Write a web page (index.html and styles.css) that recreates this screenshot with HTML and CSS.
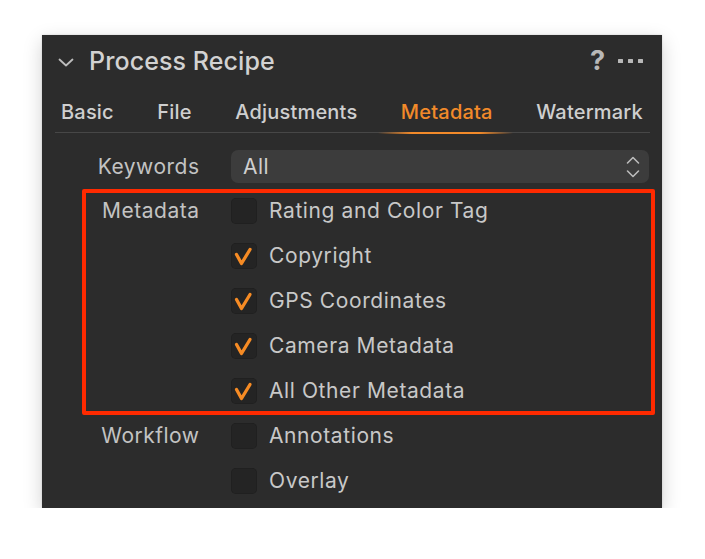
FILE: index.html
```html
<!DOCTYPE html>
<html>
<head>
<meta charset="utf-8">
<link rel="stylesheet" href="styles.css">
</head>
<body>
<div class="panel">
  <div class="header">
    <svg class="chev" width="16" height="9" viewBox="0 0 16 9"><path d="M1.5 1.5 L8 7.5 L14.5 1.5" fill="none" stroke="#bdbdbd" stroke-width="1.8" stroke-linecap="round" stroke-linejoin="round"/></svg>
    <div class="title">Process Recipe</div>
    <div class="spacer"></div>
    <div class="help">?</div>
    <div class="more"><span></span><span></span><span></span></div>
  </div>
  <div class="tabs">
    <div class="tab">Basic</div>
    <div class="tab">File</div>
    <div class="tab">Adjustments</div>
    <div class="tab active">Metadata</div>
    <div class="tab">Watermark</div>
  </div>
  <div class="form">
    <div class="row select-row">
      <div class="label">Keywords</div>
      <div class="select">
        <span>All</span>
        <svg width="14" height="22" viewBox="0 0 14 22"><path d="M1.5 7 L7 1.5 L12.5 7" fill="none" stroke="#bcbcbc" stroke-width="1.6" stroke-linecap="round" stroke-linejoin="round"/><path d="M1.5 15 L7 20.5 L12.5 15" fill="none" stroke="#bcbcbc" stroke-width="1.6" stroke-linecap="round" stroke-linejoin="round"/></svg>
      </div>
    </div>
    <div class="group highlighted">
      <div class="row">
        <div class="label">Metadata</div>
        <div class="check"></div>
        <div class="text">Rating and Color Tag</div>
      </div>
      <div class="row">
        <div class="label"></div>
        <div class="check on"><svg width="26" height="26" viewBox="0 0 26 26"><path d="M5.5 11.5 L10.5 20.5 L19 6.5" fill="none" stroke="#f68b24" stroke-width="3.3" stroke-linecap="round" stroke-linejoin="round"/></svg></div>
        <div class="text">Copyright</div>
      </div>
      <div class="row">
        <div class="label"></div>
        <div class="check on"><svg width="26" height="26" viewBox="0 0 26 26"><path d="M5.5 11.5 L10.5 20.5 L19 6.5" fill="none" stroke="#f68b24" stroke-width="3.3" stroke-linecap="round" stroke-linejoin="round"/></svg></div>
        <div class="text">GPS Coordinates</div>
      </div>
      <div class="row">
        <div class="label"></div>
        <div class="check on"><svg width="26" height="26" viewBox="0 0 26 26"><path d="M5.5 11.5 L10.5 20.5 L19 6.5" fill="none" stroke="#f68b24" stroke-width="3.3" stroke-linecap="round" stroke-linejoin="round"/></svg></div>
        <div class="text">Camera Metadata</div>
      </div>
      <div class="row">
        <div class="label"></div>
        <div class="check on"><svg width="26" height="26" viewBox="0 0 26 26"><path d="M5.5 11.5 L10.5 20.5 L19 6.5" fill="none" stroke="#f68b24" stroke-width="3.3" stroke-linecap="round" stroke-linejoin="round"/></svg></div>
        <div class="text">All Other Metadata</div>
      </div>
    </div>
    <div class="row">
      <div class="label">Workflow</div>
      <div class="check"></div>
      <div class="text">Annotations</div>
    </div>
    <div class="row">
      <div class="label"></div>
      <div class="check"></div>
      <div class="text">Overlay</div>
    </div>
  </div>
</div>
</body>
</html>
```
FILE: styles.css
```css
html, body {
  margin: 0;
  padding: 0;
  background: #ffffff;
}
body {
  font-family: "Inter", "Noto Sans", sans-serif;
  color: #c8c8c8;
  padding: 35px 0 0 42px;
}
.panel {
  width: 620px;
  height: 473px;
  background: #2c2c2c;
  box-shadow: 0 6px 18px rgba(0,0,0,0.18), 0 0 2px rgba(0,0,0,0.15);
  padding: 0 12px 0 13px;
  box-sizing: border-box;
}
.header {
  height: 52px;
  display: flex;
  align-items: center;
}
.chev {
  margin-left: 3px;
  margin-right: 15px;
  margin-top: 2px;
}
.title {
  font-size: 25px;
  font-weight: 500;
  color: #d2d2d2;
  letter-spacing: 0.1px;
}
.spacer { flex: 1; }
.help {
  font-size: 27px;
  font-weight: 700;
  color: #b8b8b8;
  margin-right: 13px;
  margin-top: -1px;
}
.more {
  display: flex;
  gap: 5px;
  margin-right: 7px;
}
.more span {
  width: 5px;
  height: 4px;
  background: #b8b8b8;
  border-radius: 0.5px;
}
.tabs {
  display: flex;
  justify-content: space-between;
  padding: 6px 7px 0 6px;
  height: 39px;
  border-bottom: 1px solid #474747;
}
.tab {
  font-size: 20px;
  font-weight: 500;
  letter-spacing: 0.2px;
  color: #cfcfcf;
  line-height: 39px;
  position: relative;
}
.tab.active {
  color: #f28a2a;
}
.tab.active::after {
  content: "";
  position: absolute;
  left: -23px;
  right: -20px;
  bottom: -2px;
  height: 2px;
  background: linear-gradient(90deg, rgba(242,138,42,0) 0%, #f28a2a 25%, #f28a2a 75%, rgba(242,138,42,0) 100%);
}
.form {
  display: flex;
  flex-direction: column;
  padding-top: 11px;
}
.row {
  display: grid;
  grid-template-columns: 144px 58px 1fr;
  align-items: center;
  height: 45px;
}
.select-row {
  grid-template-columns: 144px 1fr;
  height: 44px;
}
.label {
  grid-column: 1;
  text-align: right;
  font-size: 21px;
  letter-spacing: 0.5px;
  color: #c3c3c3;
  margin-right: -0.5px;
}
.select {
  margin-left: 32px;
  height: 33px;
  background: #3c3c3c;
  border-radius: 7px;
  display: flex;
  align-items: center;
  justify-content: space-between;
  padding: 0 9px 0 12px;
  margin-right: 1px;
  font-size: 21px;
  letter-spacing: 0.5px;
  color: #cfcfcf;
}
.select svg { margin-top: 1px; }
.check {
  grid-column: 2;
  margin-left: 32px;
  width: 26px;
  height: 26px;
  background: #242424;
  border-radius: 5px;
  box-shadow: inset 0 0 0 0.5px rgba(0,0,0,0.2);
}
.check svg { display: block; }
.text {
  padding-left: 12px;
  font-size: 21px;
  letter-spacing: 0.6px;
  color: #c8c8c8;
}
.group {
  position: relative;
}
.highlighted::before {
  content: "";
  position: absolute;
  left: 27px;
  right: -5px;
  top: 1px;
  bottom: -2px;
  border: 4px solid #ff2a00;
  border-radius: 2px;
  pointer-events: none;
}
```
